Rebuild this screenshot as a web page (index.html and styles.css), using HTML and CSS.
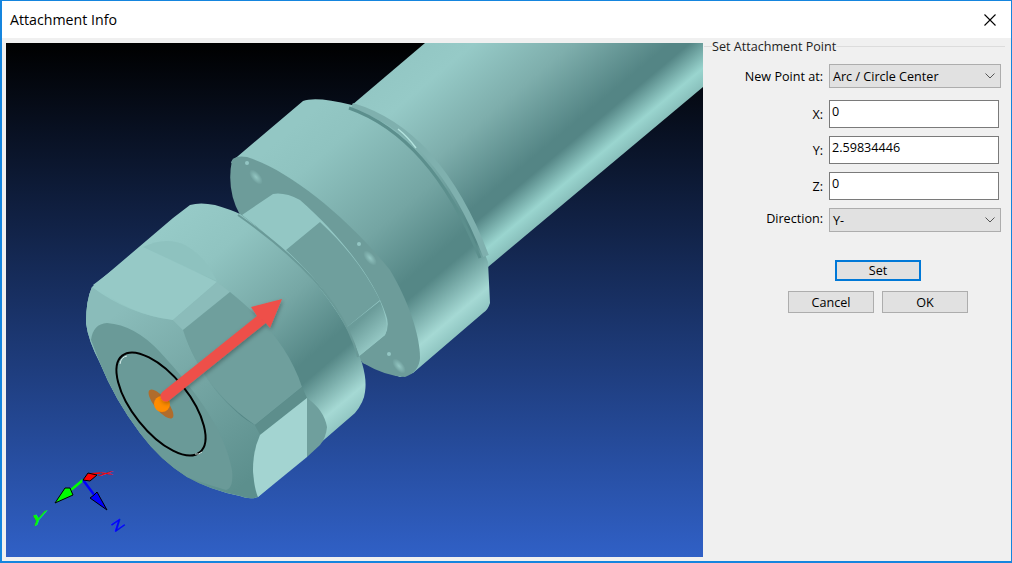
FILE: index.html
```html
<!DOCTYPE html>
<html lang="en">
<head>
<meta charset="utf-8">
<title>Attachment Info</title>
<link rel="stylesheet" href="styles.css">
</head>
<body>
<div class="window">
  <header class="titlebar">
    <span class="title">Attachment Info</span>
    <svg class="close" viewBox="0 0 12 12" aria-label="Close"><path d="M0.5 0.5 L11.5 11.5 M11.5 0.5 L0.5 11.5"/></svg>
  </header>
  <main class="content">
    <svg class="viewport" viewBox="6 43 697 514" aria-label="3D model view">
      <defs>
        <linearGradient id="bg" x1="0" y1="0" x2="0" y2="1">
          <stop offset="0" stop-color="#000"/><stop offset="0.5" stop-color="#183063"/><stop offset="1" stop-color="#3060c6"/>
        </linearGradient>
        <linearGradient id="shaft" gradientUnits="userSpaceOnUse" x1="425" y1="43" x2="561" y2="206">
          <stop offset="0" stop-color="#93c7c4"/><stop offset="0.15" stop-color="#96cac7"/><stop offset="0.45" stop-color="#7eaeac"/><stop offset="0.74" stop-color="#548585"/><stop offset="0.8" stop-color="#548585"/><stop offset="0.93" stop-color="#9ad5cf"/><stop offset="1" stop-color="#88bfbb"/>
        </linearGradient>
        <linearGradient id="flange" gradientUnits="userSpaceOnUse" x1="290" y1="130" x2="460" y2="332">
          <stop offset="0" stop-color="#93c7c4"/><stop offset="0.15" stop-color="#8fc3c0"/><stop offset="0.5" stop-color="#74a5a3"/><stop offset="0.72" stop-color="#558786"/><stop offset="0.78" stop-color="#558786"/><stop offset="0.94" stop-color="#a5d9d4"/><stop offset="1" stop-color="#90c6c2"/>
        </linearGradient>
        <linearGradient id="nut" gradientUnits="userSpaceOnUse" x1="175" y1="220" x2="346" y2="424">
          <stop offset="0" stop-color="#96cac7"/><stop offset="0.2" stop-color="#90c4c1"/><stop offset="0.5" stop-color="#76a7a5"/><stop offset="0.72" stop-color="#558786"/><stop offset="0.78" stop-color="#558786"/><stop offset="0.93" stop-color="#a5d9d4"/><stop offset="1" stop-color="#8fc4c0"/>
        </linearGradient>
        <linearGradient id="chamfer" gradientUnits="userSpaceOnUse" x1="120" y1="310" x2="250" y2="480">
          <stop offset="0" stop-color="#8abcba"/><stop offset="0.5" stop-color="#74a5a3"/><stop offset="1" stop-color="#5c8f8d"/>
        </linearGradient>
        <linearGradient id="necklit" gradientUnits="userSpaceOnUse" x1="355" y1="325" x2="378" y2="350">
          <stop offset="0" stop-color="#6a9b99"/><stop offset="1" stop-color="#9fd2ce"/>
        </linearGradient>
        <radialGradient id="holefill"><stop offset="0" stop-color="#93c6c2"/><stop offset="1" stop-color="#6d9c9a"/></radialGradient>
        <filter id="shadow" x="-20%" y="-20%" width="140%" height="140%"><feDropShadow dx="1" dy="2" stdDeviation="2" flood-color="#000" flood-opacity="0.3"/></filter>
      </defs>

      <rect x="6" y="43" width="697" height="514" fill="url(#bg)"/>

      <!-- spindle shaft -->
      <path fill="url(#shaft)" d="M352,105 L425,43 H703 V87 L488,267 L400,200 Z"/>

      <!-- flange -->
      <path fill="url(#flange)" d="M231,162 L303,101 Q316,96 352,105 Q438,130 488,262 L490,303 Q488,310 483,313 L413,373 L400,377 L363,363 Z"/>
      <path class="ridge-outer" d="M352,106 Q438,131 486,256"/>
      <path class="ridge-inner" d="M349,108 Q431,137 480,258"/>
      <path class="ridge-glint" d="M398,129 Q408,137 416,148"/>

      <!-- flange face with bolt holes -->
      <path class="face" d="M232,160 Q236,155 247,157 C290,170 350,220 390,270 C408,300 420,335 420,358 Q419,372 405,377 Q385,376 363,363 L240,215 Q226,190 232,160 Z"/>
      <ellipse class="hole" fill="url(#holefill)" cx="256" cy="177" rx="9" ry="4.5" transform="rotate(50 256 177)"/>
      <circle class="knob" cx="247" cy="163" r="2"/>
      <ellipse class="hole" fill="url(#holefill)" cx="370" cy="258" rx="9" ry="4.5" transform="rotate(50 370 258)"/>
      <circle class="knob" cx="359" cy="244" r="2"/>
      <ellipse class="hole" fill="url(#holefill)" cx="399" cy="366" rx="9" ry="4.5" transform="rotate(50 399 366)"/>
      <circle class="knob" cx="389" cy="354" r="2"/>

      <!-- neck -->
      <path class="neck" d="M242,215 L273,194 Q285,192 300,200 C340,235 375,280 386,315 Q390,325 385,335 L358,357 C352,330 300,258 242,215 Z"/>
      <path class="flat" d="M320,222 L286,250 C310,272 330,295 347,327 L380,300 C365,270 345,245 320,222 Z"/>
      <path fill="url(#necklit)" d="M347,327 L380,301 Q390,325 385,335 L358,357 Q354,340 347,327 Z"/>

      <!-- collet nut -->
      <path fill="url(#nut)" d="M92,287 L173,218 L190,205 Q200,202 215,205 Q232,210 240,214 C300,258 345,310 362,363 Q367,380 365,392 Q364,402 355,413 L258,497 Q250,500 240,496 Q210,490 187,477 Q160,460 140,433 Q115,400 100,363 Q88,340 86,323 Q86,300 92,287 Z"/>
      <path class="rim" d="M238,215 C300,258 345,305 358,357"/>
      <path fill="url(#chamfer)" d="M92,287 Q130,315 173,320 L183,330 C195,375 235,415 255,425 L260,435 L253,470 L258,497 Q250,500 240,496 Q210,490 187,477 Q160,460 140,433 Q115,400 100,363 Q88,340 86,323 Q86,300 92,287 Z"/>
      <path class="facet" d="M93,285 L143,247 L217,282 L173,320 Q130,315 93,285 Z"/>
      <path class="facet-arc" d="M143,247 Q165,236 185,245 Q205,256 217,281 Z"/>
      <path class="facet-strip" d="M217,282 L230,292 L183,330 L173,320 Z"/>
      <path class="flat" d="M183,330 L230,292 C265,320 290,350 302,387 L255,425 C225,405 195,370 183,330 Z"/>
      <path class="band" d="M255,425 L302,387 L307,398 L260,435 Z"/>
      <path class="lit" d="M307,398 L260,435 Q253,450 253,470 Q254,488 258,497 L307,457 Z"/>
      <path class="flat" d="M307,398 Q324,410 327,427 Q326,438 320,445 L307,457 Z"/>
      <path class="endface" d="M91,340 Q93,324 107,323 Q135,325 160,352 C195,390 225,430 232,470 Q234,488 226,490 Q205,484 187,477 Q160,460 140,433 Q115,400 100,363 Z"/>

      <!-- selected circle and point -->
      <ellipse class="circle" cx="161" cy="404" rx="62" ry="28" transform="rotate(51.3 161 404)"/>
      <path class="glint" d="M120,364 Q121,357 127,356"/>
      <path class="glint" d="M195,454 Q199,455 202,452"/>
      <ellipse class="pointshade" cx="161" cy="404" rx="18" ry="6.5" transform="rotate(51 161 404)"/>
      <circle class="point" cx="162" cy="404" r="8"/>
      <g filter="url(#shadow)">
        <path class="arrow-line" d="M166,396 L262,319"/>
        <path class="arrow-head" d="M282,299 L251,307 L257,316 L265,322 L270,328 Z"/>
      </g>

      <!-- axis triad -->
      <path class="axis-g" d="M83,480 L66,494"/>
      <path class="cone-g" d="M55,503 L65,488 L70,488 L73,495 Z"/>
      <path class="axis-b" d="M83,480 L95,496"/>
      <path class="cone-b" d="M107,510 L97,492 L94,495 L90,498 Z"/>
      <path class="axis-r" d="M88,474 L100,473"/>
      <path class="cone-r" d="M83,480 L88,473 L97,475 L90,481 Z"/>
      <text class="axis-label label-r" transform="matrix(1.6 -0.2 -0.1 0.32 98 476)">X</text>
      <text class="axis-label label-g" transform="matrix(1.5 -0.6 -0.45 1.25 29 528)">Y</text>
      <text class="axis-label label-b" transform="matrix(1.18 -0.82 0.5 0.7 115 532)">Z</text>
    </svg>

    <section class="panel">
      <div class="legend"><span class="legend-text">Set Attachment Point</span></div>
      <div class="form">
        <div class="row row-first">
          <label class="label">New Point at:</label>
          <div class="select"><span>Arc / Circle Center</span><svg class="chev" viewBox="0 0 10 6"><path d="M0.5 0.5 L5 5 L9.5 0.5"/></svg></div>
        </div>
        <div class="row"><label class="label">X:</label><input class="field" value="0"></div>
        <div class="row"><label class="label">Y:</label><input class="field" value="2.59834446"></div>
        <div class="row"><label class="label">Z:</label><input class="field" value="0"></div>
        <div class="row">
          <label class="label label-raised">Direction:</label>
          <div class="select"><span>Y-</span><svg class="chev" viewBox="0 0 10 6"><path d="M0.5 0.5 L5 5 L9.5 0.5"/></svg></div>
        </div>
      </div>
      <div class="actions">
        <button class="btn btn-default">Set</button>
        <div class="btn-row">
          <button class="btn">Cancel</button>
          <button class="btn">OK</button>
        </div>
      </div>
    </section>
  </main>
</div>
</body>
</html>
```
FILE: styles.css
```css
* { box-sizing: border-box; }
html, body { margin: 0; padding: 0; }
body { width: 1012px; height: 563px; overflow: hidden; background: #fff; }
.window {
  width: 1012px; height: 563px;
  display: flex; flex-direction: column;
  border: 1px solid #1585de;
  border-left-width: 2px;
  border-bottom-width: 2px;
  background: #f0f0f0;
  font-family: "Open Sans", "Liberation Sans", sans-serif;
  color: #000;
}
.titlebar {
  height: 37px; flex: none;
  background: #fff;
  display: flex; align-items: center; justify-content: space-between;
  padding: 0 15px 0 8px;
}
.title { font-size: 14.2px; }
.close { width: 12px; height: 12px; }
.close path { fill: none; stroke: #000; stroke-width: 1.1; }
.content { flex: 1; display: flex; padding: 5px 0 0 4px; min-height: 0; }
.viewport { width: 697px; height: 514px; flex: none; display: block; }
.panel { flex: 1; min-width: 0; font-size: 12.6px; }

.ridge-outer { fill: none; stroke: #7fb0ae; stroke-width: 6; }
.ridge-inner { fill: none; stroke: #5c8f8d; stroke-width: 3; }
.ridge-glint { fill: none; stroke: #b3e3de; stroke-width: 1.5; }
.face { fill: #6d9c9a; }
.hole { stroke: none; }
.knob { fill: #93c6c3; }
.neck { fill: #93c7c4; }
.flat { fill: #6f9f9d; }
.rim { fill: none; stroke: #6a9a98; stroke-width: 2; }
.facet { fill: #96c9c6; }
.facet-arc { fill: #8ec2bf; }
.facet-strip { fill: #8bbcba; }
.band { fill: #5d8e8c; }
.lit { fill: #a3d4d1; }
.endface { fill: #6a9a98; }
.circle { fill: none; stroke: #000; stroke-width: 2; }
.glint { fill: none; stroke: #d5ece9; stroke-width: 1; }
.pointshade { fill: #b06c2c; }
.point { fill: #ff8c00; }
.arrow-line { fill: none; stroke: #ee4f49; stroke-width: 11; stroke-linecap: round; }
.arrow-head { fill: #ee4f49; }
.axis-g { stroke: #00ff00; stroke-width: 2.5; fill: none; }
.axis-b { stroke: #0000ff; stroke-width: 2.5; fill: none; }
.axis-r { stroke: #ff0000; stroke-width: 1.5; fill: none; }
.cone-g { fill: #00ff00; stroke: #000; stroke-width: 1; }
.cone-b { fill: #0000ff; stroke: #000; stroke-width: 1; }
.cone-r { fill: #ff0000; stroke: #000; stroke-width: 1; }
.axis-label { font-family: "Liberation Sans", sans-serif; font-size: 14px; stroke-width: 0.5; }
.label-r { fill: #ff0000; stroke: #ff0000; }
.label-g { fill: #00ff00; stroke: #00ff00; }
.label-b { fill: #0000ff; stroke: #0000ff; }

.legend {
  height: 8px; margin: 3px 6px 0 1px;
  border-top: 1px solid #dcdcdc;
  padding-left: 8px;
  display: flex;
}
.legend-text {
  background: #f0f0f0; height: 16px; line-height: 16px;
  margin-top: -8px; white-space: nowrap; color: #222;
}
.form { display: flex; flex-direction: column; gap: 8px; margin-top: 10px; }
.row { display: flex; align-items: center; gap: 6px; }
.row-first { margin-bottom: 4px; }
.label { width: 120px; flex: none; text-align: right; }
.label-raised { margin-bottom: 4px; }
.select {
  width: 172px; height: 24px;
  background: #e1e1e1; border: 1px solid #adadad;
  display: flex; align-items: center; justify-content: space-between;
  padding: 0 5px 0 3px; white-space: nowrap;
}
.chev { width: 10px; height: 6px; }
.chev path { fill: none; stroke: #555; stroke-width: 1; }
.field {
  width: 170px; height: 28px;
  background: #fff; border: 1px solid #7a7a7a; border-radius: 0;
  font: inherit; color: #000;
  padding: 0 2px 6px; margin: 0; outline: none;
}
.actions { width: 180px; margin: 28px 0 0 85px; display: flex; flex-direction: column; align-items: center; gap: 10px; }
.btn-row { display: flex; gap: 8px; }
.btn {
  width: 86px; height: 22px; padding: 0;
  background: #e1e1e1; border: 1px solid #adadad; border-radius: 0;
  font: inherit; color: #000;
}
.btn-default { border: 2px solid #0078d7; height: 21px; }
```
